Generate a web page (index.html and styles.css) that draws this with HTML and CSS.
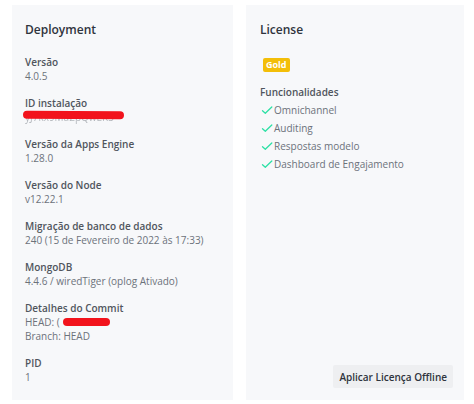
FILE: index.html
```html
<!DOCTYPE html>
<html lang="pt">
<head>
<meta charset="utf-8">
<link rel="stylesheet" href="styles.css">
</head>
<body>
<div class="page">
  <section class="card">
    <h2 class="title">Deployment</h2>
    <div class="fields">
      <div class="field"><div class="label">Versão</div><div class="value">4.0.5</div></div>
      <div class="field"><div class="label">ID instalação</div><div class="value redacted-row"><span class="blur">yJ7kx9Ma2pQwER3</span><span class="scribble s1"></span></div></div>
      <div class="field"><div class="label">Versão da Apps Engine</div><div class="value">1.28.0</div></div>
      <div class="field"><div class="label">Versão do Node</div><div class="value">v12.22.1</div></div>
      <div class="field"><div class="label">Migração de banco de dados</div><div class="value">240 (15 de Fevereiro de 2022 às 17:33)</div></div>
      <div class="field"><div class="label">MongoDB</div><div class="value">4.4.6 / wiredTiger (oplog Ativado)</div></div>
      <div class="field"><div class="label">Detalhes do Commit</div><div class="value redacted-row">HEAD: (<span class="scribble s2"></span></div><div class="value">Branch: HEAD</div></div>
      <div class="field"><div class="label">PID</div><div class="value">1</div></div>
    </div>
  </section>
  <section class="card license">
    <h2 class="title">License</h2>
    <div class="badges"><span class="badge">Gold</span></div>
    <div class="label">Funcionalidades</div>
    <ul class="features">
      <li><svg class="check" viewBox="0 0 12 12" width="12" height="12"><path d="M1.5 6.8 L4.3 9.3 L10.8 3" fill="none" stroke="#2de0a5" stroke-width="1.3" stroke-linecap="round" stroke-linejoin="round"/></svg>Omnichannel</li>
      <li><svg class="check" viewBox="0 0 12 12" width="12" height="12"><path d="M1.5 6.8 L4.3 9.3 L10.8 3" fill="none" stroke="#2de0a5" stroke-width="1.3" stroke-linecap="round" stroke-linejoin="round"/></svg>Auditing</li>
      <li><svg class="check" viewBox="0 0 12 12" width="12" height="12"><path d="M1.5 6.8 L4.3 9.3 L10.8 3" fill="none" stroke="#2de0a5" stroke-width="1.3" stroke-linecap="round" stroke-linejoin="round"/></svg>Respostas modelo</li>
      <li><svg class="check" viewBox="0 0 12 12" width="12" height="12"><path d="M1.5 6.8 L4.3 9.3 L10.8 3" fill="none" stroke="#2de0a5" stroke-width="1.3" stroke-linecap="round" stroke-linejoin="round"/></svg>Dashboard de Engajamento</li>
    </ul>
    <div class="actions"><button class="btn">Aplicar Licença Offline</button></div>
  </section>
</div>
</body>
</html>
```
FILE: styles.css
```css
* { box-sizing: border-box; }
html, body { margin: 0; background: #ffffff; }
body {
  font-family: "Open Sans", "Noto Sans", sans-serif;
  font-size: 10px;
  color: #6c727a;
}
.page {
  display: grid;
  grid-template-columns: 221px 218px;
  column-gap: 13px;
  padding: 5px 10px 4px 12px;
  height: 404px;
}
.card {
  background: #f7f8fa;
  padding: 16px 13px 12px 13px;
  display: flex;
  flex-direction: column;
}
.license { padding-left: 14px; }
.title {
  margin: 0;
  font-size: 12px;
  line-height: 18px;
  font-weight: 600;
  color: #2f343d;
}
.fields {
  margin-top: 16px;
  display: flex;
  flex-direction: column;
  gap: 13px;
}
.label {
  font-weight: 600;
  color: #50555d;
  line-height: 14px;
}
.value {
  line-height: 14px;
  color: #6c727a;
}
.redacted-row { position: relative; }
.blur { color: #b4b8bd; filter: blur(0.7px); }
.scribble {
  position: absolute;
  height: 8px;
  background: #f2131c;
  border-radius: 4px;
}
.s1 { left: -2px; top: 1px; width: 101px; transform: rotate(0.4deg); }
.s2 { left: 38px; top: 3px; width: 47px; }
.badges { margin-top: 18px; margin-bottom: 13px; padding-left: 3px; }
.badge {
  display: inline-block;
  background: #f3be08;
  color: #ffffff;
  font-weight: 700;
  font-size: 9px;
  line-height: 14px;
  padding: 0 3px;
  border-radius: 2px;
}
.features {
  list-style: none;
  margin: 4px 0 0 0;
  padding: 0;
  display: flex;
  flex-direction: column;
  gap: 4px;
}
.features li {
  display: flex;
  align-items: center;
  line-height: 14px;
}
.check { flex: none; margin-right: 1px; margin-left: 1px; }
.actions {
  margin-top: auto;
  display: flex;
  justify-content: flex-end;
}
.btn {
  font-family: inherit;
  font-size: 10px;
  font-weight: 600;
  color: #2f343d;
  background: #eeeff1;
  border: none;
  border-radius: 2px;
  height: 23px;
  padding: 0 6px;
  margin-right: -2px;
}
```
